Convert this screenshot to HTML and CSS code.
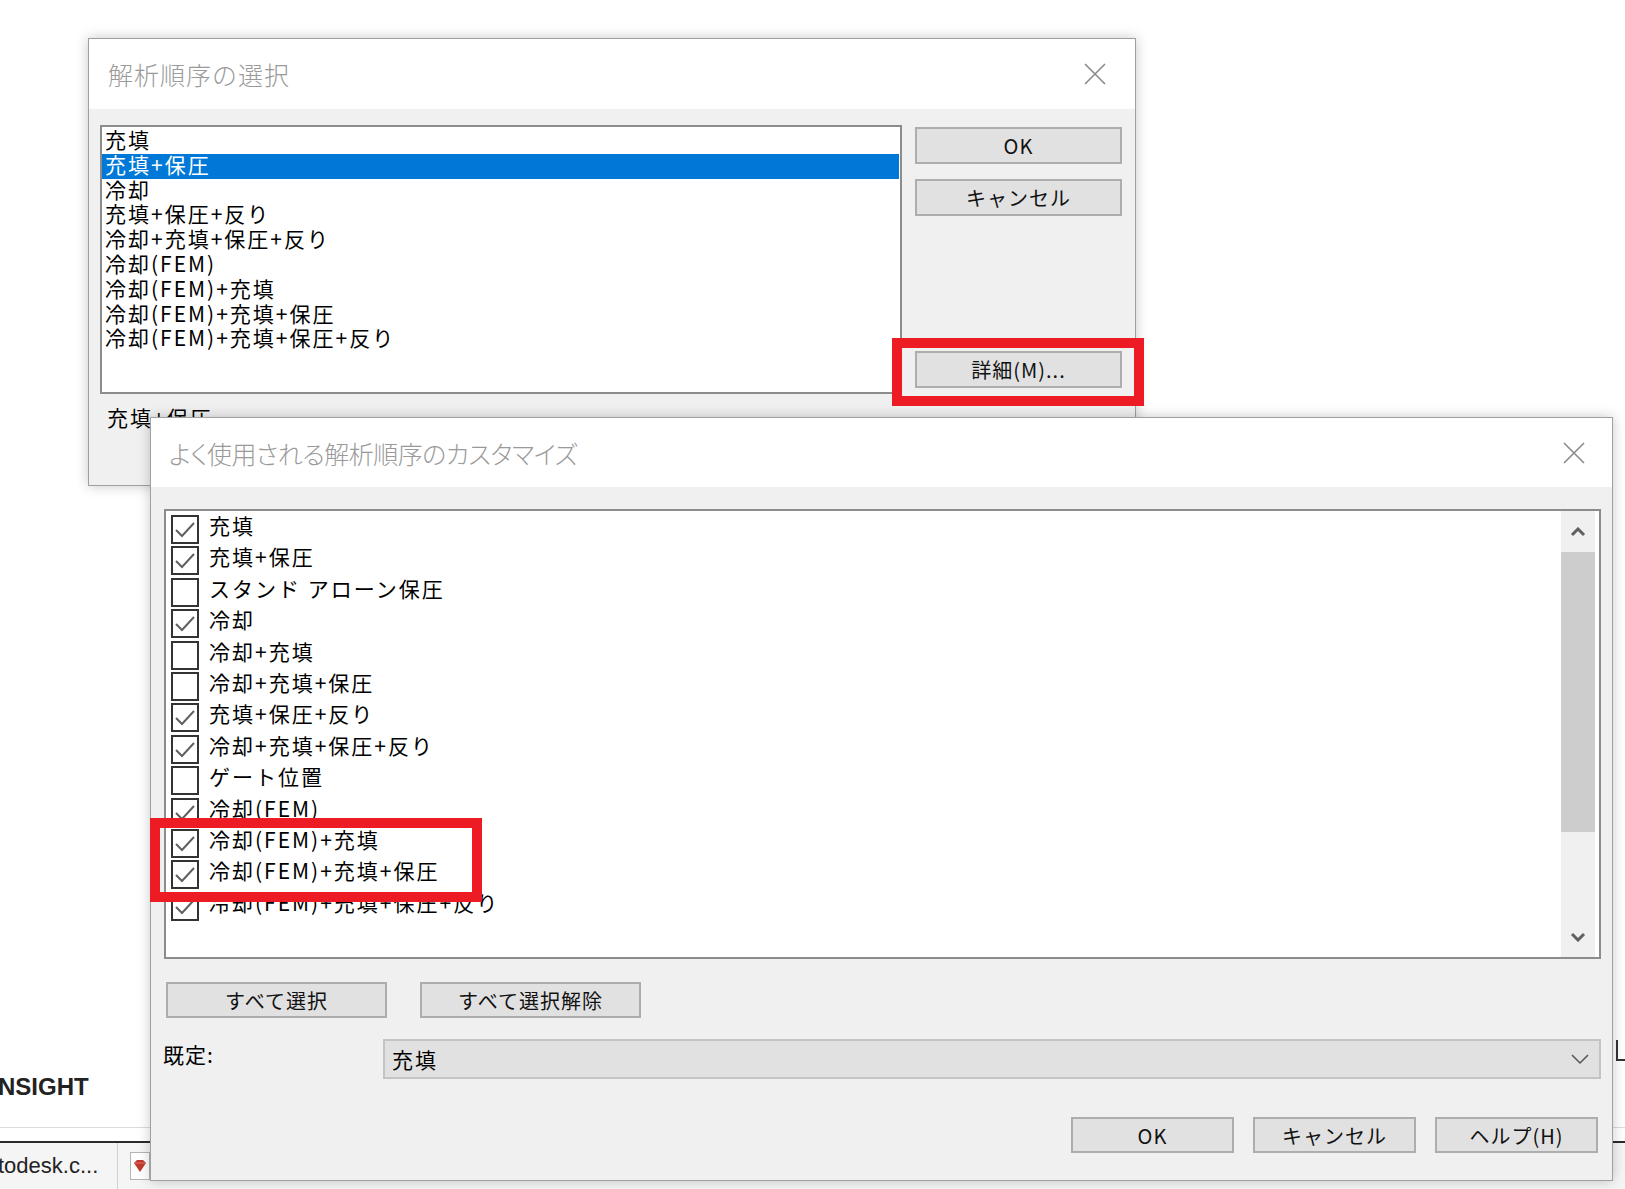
FILE: index.html
```html
<!DOCTYPE html>
<html lang="ja">
<head>
    <meta charset="UTF-8">
    <meta name="viewport" content="width=device-width, initial-scale=1.0">
    <title>解析順序の選択</title>
    <link rel="stylesheet" href="styles.css">
</head>
<body>
    <!-- アプリ本体（ダイアログの後ろ） -->
    <div class="desktop">
        <div class="app-brand">NSIGHT</div>
        <div class="taskbar">
            <span class="task-name">todesk.c...</span>
            <span class="task-icon">
                <svg width="16" height="16" viewBox="0 0 16 16"><path d="M2 5 L5 2 L11 2 L14 5 L8 14 Z" fill="#c0392b"/><path d="M2 5 L14 5" stroke="#e57373" stroke-width="1"/></svg>
            </span>
        </div>
    </div>
    <span class="edge-mark"></span>

    <!-- 解析順序の選択 -->
    <section class="dialog dlg-order">
        <div class="dlg-title">
            <span>解析順序の選択</span>
            <svg class="close" width="22" height="22" viewBox="0 0 22 22"><path d="M1 1 L21 21 M21 1 L1 21" stroke="#8a8a8a" stroke-width="1.6"/></svg>
        </div>
        <div class="order-body">
            <div class="order-main">
                <ul class="listbox">
                    <li>充填</li>
                    <li class="selected">充填+保圧</li>
                    <li>冷却</li>
                    <li>充填+保圧+反り</li>
                    <li>冷却+充填+保圧+反り</li>
                    <li>冷却(FEM)</li>
                    <li>冷却(FEM)+充填</li>
                    <li>冷却(FEM)+充填+保圧</li>
                    <li>冷却(FEM)+充填+保圧+反り</li>
                </ul>
                <div class="current">充填+保圧</div>
            </div>
            <div class="order-side">
                <button class="btn">OK</button>
                <button class="btn">キャンセル</button>
                <button class="btn btn-detail">詳細(M)...</button>
            </div>
        </div>
    </section>

    <!-- よく使用される解析順序のカスタマイズ -->
    <section class="dialog dlg-custom">
        <div class="dlg-title">
            <span>よく使用される解析順序のカスタマイズ</span>
            <svg class="close" width="22" height="22" viewBox="0 0 22 22"><path d="M1 1 L21 21 M21 1 L1 21" stroke="#8a8a8a" stroke-width="1.6"/></svg>
        </div>
        <div class="custom-body">
            <div class="checklist">
                <div class="check-rows">
                    <label class="check-row"><span class="cb checked"></span><span class="cb-text">充填</span></label>
                    <label class="check-row"><span class="cb checked"></span><span class="cb-text">充填+保圧</span></label>
                    <label class="check-row"><span class="cb"></span><span class="cb-text">スタンド アローン保圧</span></label>
                    <label class="check-row"><span class="cb checked"></span><span class="cb-text">冷却</span></label>
                    <label class="check-row"><span class="cb"></span><span class="cb-text">冷却+充填</span></label>
                    <label class="check-row"><span class="cb"></span><span class="cb-text">冷却+充填+保圧</span></label>
                    <label class="check-row"><span class="cb checked"></span><span class="cb-text">充填+保圧+反り</span></label>
                    <label class="check-row"><span class="cb checked"></span><span class="cb-text">冷却+充填+保圧+反り</span></label>
                    <label class="check-row"><span class="cb"></span><span class="cb-text">ゲート位置</span></label>
                    <label class="check-row"><span class="cb checked"></span><span class="cb-text">冷却(FEM)</span></label>
                    <label class="check-row"><span class="cb checked"></span><span class="cb-text">冷却(FEM)+充填</span></label>
                    <label class="check-row"><span class="cb checked"></span><span class="cb-text">冷却(FEM)+充填+保圧</span></label>
                    <label class="check-row"><span class="cb checked"></span><span class="cb-text">冷却(FEM)+充填+保圧+反り</span></label>
                </div>
                <div class="scrollbar">
                    <div class="sb-arrow">
                        <svg width="16" height="10" viewBox="0 0 16 10"><path d="M2 8 L8 2 L14 8" fill="none" stroke="#606060" stroke-width="3"/></svg>
                    </div>
                    <div class="sb-thumb"></div>
                    <div class="sb-track"></div>
                    <div class="sb-arrow">
                        <svg width="16" height="10" viewBox="0 0 16 10"><path d="M2 2 L8 8 L14 2" fill="none" stroke="#606060" stroke-width="3"/></svg>
                    </div>
                </div>
            </div>

            <div class="select-actions">
                <button class="btn btn-wide">すべて選択</button>
                <button class="btn btn-wide">すべて選択解除</button>
            </div>

            <div class="default-row">
                <span class="default-label">既定:</span>
                <div class="combo">
                    <span>充填</span>
                    <svg width="20" height="12" viewBox="0 0 20 12"><path d="M2 2 L10 10 L18 2" fill="none" stroke="#555" stroke-width="1.5"/></svg>
                </div>
            </div>

            <div class="dlg-footer">
                <button class="btn btn-foot">OK</button>
                <button class="btn btn-foot">キャンセル</button>
                <button class="btn btn-foot">ヘルプ(H)</button>
            </div>
        </div>
    </section>

    <div class="highlight hl-detail"></div>
    <div class="highlight hl-fem"></div>
</body>
</html>
```

FILE: styles.css
```css
html, body {
    margin: 0;
    padding: 0;
    width: 1625px;
    height: 1189px;
    overflow: hidden;
    background-color: #fff;
}
body {
    position: relative;
    font-family: "Noto Sans CJK JP", "Noto Sans", sans-serif;
    color: #000;
}

/* 背景のアプリとタスクバー */
.desktop {
    height: 1189px;
    display: flex;
    flex-direction: column;
    justify-content: flex-end;
}
.app-brand {
    height: 66px;
    line-height: 52px;
    margin-bottom: 13px;
    border-bottom: 1px solid #dcdcdc;
    font-family: "Liberation Sans", Arial, sans-serif;
    font-weight: bold;
    font-size: 24px;
    color: #222;
    margin-left: -2px;
}
.taskbar {
    height: 46px;
    border-top: 2px solid #2b2b2b;
    background-color: #f5f5f5;
    display: flex;
    align-items: center;
}
.task-name {
    width: 119px;
    height: 100%;
    line-height: 46px;
    border-right: 1px solid #d0d0d0;
    font-family: "Liberation Sans", Arial, sans-serif;
    font-size: 22px;
    color: #222;
    margin-left: -2px;
}
.task-icon {
    width: 18px;
    height: 26px;
    margin-left: 12px;
    border: 1px solid #b5b5b5;
    background-color: #fff;
    display: flex;
    align-items: center;
    justify-content: center;
}
.edge-mark {
    position: absolute;
    left: 1616px;
    top: 1040px;
    width: 12px;
    height: 19px;
    border-left: 2px solid #333;
    border-bottom: 2px solid #333;
}

/* ダイアログ共通 */
.dialog {
    position: absolute;
    box-sizing: border-box;
    background-color: #f0f0f0;
    border: 1px solid #a0a0a0;
    box-shadow: 0 0 12px rgba(0, 0, 0, 0.22);
    display: flex;
    flex-direction: column;
}
.dlg-title {
    flex: none;
    height: 70px;
    background-color: #fff;
    display: flex;
    align-items: center;
    justify-content: space-between;
    padding: 0 29px 0 19px;
    font-size: 25px;
    font-weight: 300;
    letter-spacing: 1px;
    color: #9a9a9a;
}
.btn {
    box-sizing: border-box;
    background-color: #e1e1e1;
    border: 2px solid #adadad;
    font-family: "Noto Sans CJK JP", sans-serif;
    font-size: 20px;
    letter-spacing: 1px;
    color: #111;
    padding: 0;
    cursor: pointer;
}

/* 解析順序の選択 */
.dlg-order {
    left: 88px;
    top: 38px;
    width: 1048px;
    height: 448px;
}
.order-body {
    display: flex;
    gap: 13px;
    padding: 16px 0 0 11px;
}
.order-main {
    width: 802px;
}
.listbox {
    box-sizing: border-box;
    height: 269px;
    margin: 0;
    padding: 2px 1px 0 0;
    list-style: none;
    background-color: #fff;
    border: 2px solid #8c8c8c;
    font-size: 21px;
    letter-spacing: 2px;
}
.listbox li {
    height: 24.8px;
    line-height: 20px;
    padding-left: 3px;
    white-space: nowrap;
}
.listbox li.selected {
    background-color: #0078d7;
    color: #fff;
}
.current {
    margin: 11px 0 0 7px;
    font-size: 21px;
    letter-spacing: 2px;
    line-height: 25px;
}
.order-side {
    width: 207px;
    display: flex;
    flex-direction: column;
    padding-top: 2px;
}
.order-side .btn {
    height: 37px;
}
.order-side .btn + .btn {
    margin-top: 15px;
}
.order-side .btn.btn-detail {
    margin-top: 135px;
}

/* よく使用される解析順序のカスタマイズ */
.dlg-custom {
    left: 150px;
    top: 417px;
    width: 1463px;
    height: 764px;
}
.dlg-custom .dlg-title {
    height: 69px;
    padding: 0 27px 0 18px;
    letter-spacing: -0.5px;
    font-feature-settings: "palt";
}
.custom-body {
    display: flex;
    flex-direction: column;
    padding: 22px 11px 0 13px;
}
.checklist {
    box-sizing: border-box;
    height: 450px;
    background-color: #fff;
    border: 2px solid #8c8c8c;
    display: flex;
}
.check-rows {
    flex: 1;
    padding: 5px 0 0 5px;
    overflow: hidden;
}
.check-row {
    height: 31.4px;
    display: flex;
    align-items: flex-start;
    gap: 10px;
    font-size: 21px;
    letter-spacing: 2px;
    white-space: nowrap;
}
.cb-text {
    line-height: 20px;
    margin-top: -1px;
}
.cb {
    flex: none;
    box-sizing: border-box;
    width: 28px;
    height: 29px;
    border: 2px solid #333;
    background-color: #fff;
    margin-top: -1px;
}
.cb.checked {
    background-image: url("data:image/svg+xml,%3Csvg xmlns='http://www.w3.org/2000/svg' width='24' height='25' viewBox='0 0 24 25'%3E%3Cpath d='M3 13 L9 19 L21 6' fill='none' stroke='%23606060' stroke-width='2'/%3E%3C/svg%3E");
    background-repeat: no-repeat;
}
.scrollbar {
    width: 34px;
    margin-right: 4px;
    background-color: #f0f0f0;
    display: flex;
    flex-direction: column;
}
.sb-arrow {
    height: 41px;
    display: flex;
    align-items: center;
    justify-content: center;
}
.sb-thumb {
    height: 280px;
    background-color: #cdcdcd;
}
.sb-track {
    flex: 1;
}
.select-actions {
    display: flex;
    gap: 33px;
    margin: 23px 0 0 2px;
}
.btn-wide {
    width: 221px;
    height: 36px;
}
.default-row {
    display: flex;
    align-items: flex-start;
    margin-top: 21px;
}
.default-label {
    width: 220px;
    font-size: 21px;
    letter-spacing: 1px;
    line-height: 30px;
    margin-left: -1px;
}
.combo {
    box-sizing: border-box;
    flex: 1;
    height: 40px;
    background-color: #e1e1e1;
    border: 2px solid #c4c4c4;
    display: flex;
    align-items: center;
    justify-content: space-between;
    padding: 0 9px 0 7px;
    font-size: 21px;
    letter-spacing: 2px;
}
.dlg-footer {
    display: flex;
    justify-content: flex-end;
    gap: 19px;
    margin: 38px 3px 0 0;
}
.btn-foot {
    width: 163px;
    height: 36px;
}

/* 赤枠の強調 */
.highlight {
    position: absolute;
    box-sizing: border-box;
    border: 10px solid #ed1c24;
}
.hl-detail {
    left: 892px;
    top: 338px;
    width: 252px;
    height: 68px;
}
.hl-fem {
    left: 150px;
    top: 818px;
    width: 332px;
    height: 84px;
}
```
